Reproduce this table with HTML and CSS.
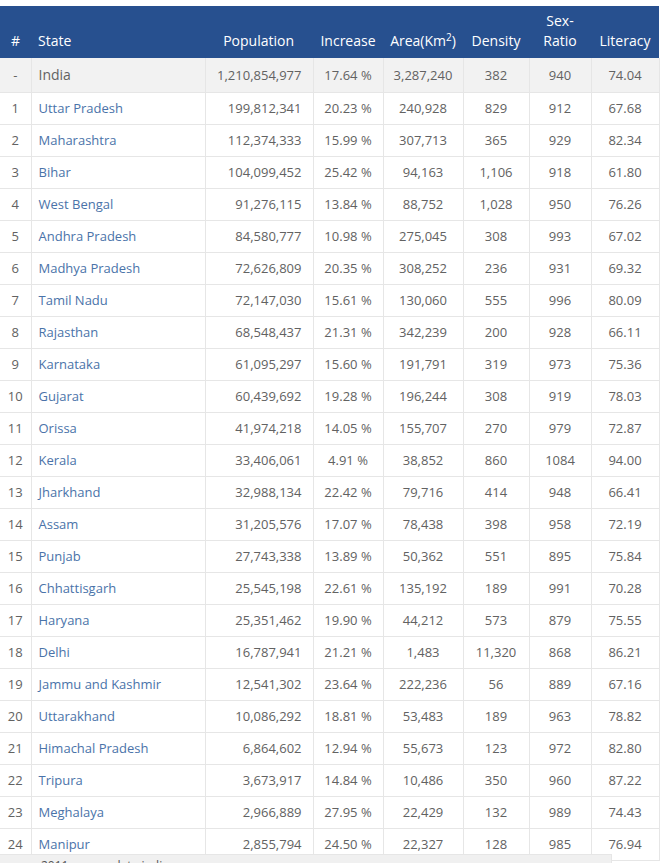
FILE: index.html
```html
<!DOCTYPE html>
<html>
<head>
<meta charset="utf-8">
<link rel="stylesheet" href="styles.css">
</head>
<body>
<div class="wrap">
<table class="pop">
<colgroup>
<col class="c-num"><col class="c-state"><col class="c-pop"><col class="c-inc"><col class="c-area"><col class="c-den"><col class="c-sex"><col class="c-lit">
</colgroup>
<thead>
<tr><th>#</th><th class="left">State</th><th>Population</th><th>Increase</th><th>Area(Km<sup>2</sup>)</th><th>Density</th><th>Sex-<br>Ratio</th><th>Literacy</th></tr>
</thead>
<tbody>
<tr class="total"><td>-</td><td class="left">India</td><td class="num">1,210,854,977</td><td>17.64 %</td><td>3,287,240</td><td>382</td><td>940</td><td>74.04</td></tr>
<tr><td>1</td><td class="left"><a>Uttar Pradesh</a></td><td class="num">199,812,341</td><td>20.23 %</td><td>240,928</td><td>829</td><td>912</td><td>67.68</td></tr>
<tr><td>2</td><td class="left"><a>Maharashtra</a></td><td class="num">112,374,333</td><td>15.99 %</td><td>307,713</td><td>365</td><td>929</td><td>82.34</td></tr>
<tr><td>3</td><td class="left"><a>Bihar</a></td><td class="num">104,099,452</td><td>25.42 %</td><td>94,163</td><td>1,106</td><td>918</td><td>61.80</td></tr>
<tr><td>4</td><td class="left"><a>West Bengal</a></td><td class="num">91,276,115</td><td>13.84 %</td><td>88,752</td><td>1,028</td><td>950</td><td>76.26</td></tr>
<tr><td>5</td><td class="left"><a>Andhra Pradesh</a></td><td class="num">84,580,777</td><td>10.98 %</td><td>275,045</td><td>308</td><td>993</td><td>67.02</td></tr>
<tr><td>6</td><td class="left"><a>Madhya Pradesh</a></td><td class="num">72,626,809</td><td>20.35 %</td><td>308,252</td><td>236</td><td>931</td><td>69.32</td></tr>
<tr><td>7</td><td class="left"><a>Tamil Nadu</a></td><td class="num">72,147,030</td><td>15.61 %</td><td>130,060</td><td>555</td><td>996</td><td>80.09</td></tr>
<tr><td>8</td><td class="left"><a>Rajasthan</a></td><td class="num">68,548,437</td><td>21.31 %</td><td>342,239</td><td>200</td><td>928</td><td>66.11</td></tr>
<tr><td>9</td><td class="left"><a>Karnataka</a></td><td class="num">61,095,297</td><td>15.60 %</td><td>191,791</td><td>319</td><td>973</td><td>75.36</td></tr>
<tr><td>10</td><td class="left"><a>Gujarat</a></td><td class="num">60,439,692</td><td>19.28 %</td><td>196,244</td><td>308</td><td>919</td><td>78.03</td></tr>
<tr><td>11</td><td class="left"><a>Orissa</a></td><td class="num">41,974,218</td><td>14.05 %</td><td>155,707</td><td>270</td><td>979</td><td>72.87</td></tr>
<tr><td>12</td><td class="left"><a>Kerala</a></td><td class="num">33,406,061</td><td>4.91 %</td><td>38,852</td><td>860</td><td>1084</td><td>94.00</td></tr>
<tr><td>13</td><td class="left"><a>Jharkhand</a></td><td class="num">32,988,134</td><td>22.42 %</td><td>79,716</td><td>414</td><td>948</td><td>66.41</td></tr>
<tr><td>14</td><td class="left"><a>Assam</a></td><td class="num">31,205,576</td><td>17.07 %</td><td>78,438</td><td>398</td><td>958</td><td>72.19</td></tr>
<tr><td>15</td><td class="left"><a>Punjab</a></td><td class="num">27,743,338</td><td>13.89 %</td><td>50,362</td><td>551</td><td>895</td><td>75.84</td></tr>
<tr><td>16</td><td class="left"><a>Chhattisgarh</a></td><td class="num">25,545,198</td><td>22.61 %</td><td>135,192</td><td>189</td><td>991</td><td>70.28</td></tr>
<tr><td>17</td><td class="left"><a>Haryana</a></td><td class="num">25,351,462</td><td>19.90 %</td><td>44,212</td><td>573</td><td>879</td><td>75.55</td></tr>
<tr><td>18</td><td class="left"><a>Delhi</a></td><td class="num">16,787,941</td><td>21.21 %</td><td>1,483</td><td>11,320</td><td>868</td><td>86.21</td></tr>
<tr><td>19</td><td class="left"><a>Jammu and Kashmir</a></td><td class="num">12,541,302</td><td>23.64 %</td><td>222,236</td><td>56</td><td>889</td><td>67.16</td></tr>
<tr><td>20</td><td class="left"><a>Uttarakhand</a></td><td class="num">10,086,292</td><td>18.81 %</td><td>53,483</td><td>189</td><td>963</td><td>78.82</td></tr>
<tr><td>21</td><td class="left"><a>Himachal Pradesh</a></td><td class="num">6,864,602</td><td>12.94 %</td><td>55,673</td><td>123</td><td>972</td><td>82.80</td></tr>
<tr><td>22</td><td class="left"><a>Tripura</a></td><td class="num">3,673,917</td><td>14.84 %</td><td>10,486</td><td>350</td><td>960</td><td>87.22</td></tr>
<tr><td>23</td><td class="left"><a>Meghalaya</a></td><td class="num">2,966,889</td><td>27.95 %</td><td>22,429</td><td>132</td><td>989</td><td>74.43</td></tr>
<tr><td>24</td><td class="left"><a>Manipur</a></td><td class="num">2,855,794</td><td>24.50 %</td><td>22,327</td><td>128</td><td>985</td><td>76.94</td></tr>
</tbody>
</table>
<div class="source">2011 census data india</div>
</div>
</body>
</html>
```

FILE: styles.css
```css
html, body {
  margin: 0;
  padding: 0;
  background: #ffffff;
}
body {
  font-family: "Open Sans", "Liberation Sans", sans-serif;
  color: #626262;
  overflow: hidden;
}
.wrap {
  position: relative;
  padding-top: 6px;
  height: 857px;
  overflow: hidden;
}
.pop {
  width: 659px;
  border-collapse: collapse;
  table-layout: fixed;
  font-size: 13px;
}
.c-num { width: 31px; }
.c-state { width: 174px; }
.c-pop { width: 108px; }
.c-inc { width: 70px; }
.c-area { width: 80px; }
.c-den { width: 66px; }
.c-sex { width: 62px; }
.c-lit { width: 68px; }
.pop thead th {
  background: #27508f;
  color: #ffffff;
  font-weight: normal;
  font-size: 14px;
  line-height: 20px;
  height: 52px;
  box-sizing: border-box;
  padding: 0 4px 7px 4px;
  vertical-align: bottom;
  text-align: center;
  white-space: nowrap;
}
.pop thead th:nth-child(3) {
  text-align: right;
  padding-right: 19px;
}
.pop thead th.left { text-align: left; padding-left: 7px; }
.pop sup {
  font-size: 10px;
  line-height: 0;
  vertical-align: 5px;
}
.pop tbody td {
  height: 32px;
  box-sizing: border-box;
  padding: 0 4px;
  text-align: center;
  border: 1px solid #e6e6e6;
  white-space: nowrap;
  line-height: 18px;
}
.pop tbody td:first-child { border-left: none; }
.pop tbody td.left { text-align: left; padding-left: 7px; }
.pop tbody td.num { text-align: right; padding-right: 11px; }
.pop tbody tr.total td {
  background: #f2f2f2;
  height: 34px;
  font-size: 13px;
  border-top: none;
}
.pop tbody tr.total td.left { font-size: 14px; }
.pop a {
  color: #4a73a9;
  text-decoration: none;
}
.source {
  position: absolute;
  left: 0;
  top: 854px;
  width: 612px;
  height: 30px;
  background: #f0f0f0;
  border-top: 1px solid #e6e6e6;
  border-right: 1px solid #e6e6e6;
  box-sizing: border-box;
  font-size: 12px;
  color: #555;
  padding: 3px 0 0 41px;
  line-height: 16px;
}
```
